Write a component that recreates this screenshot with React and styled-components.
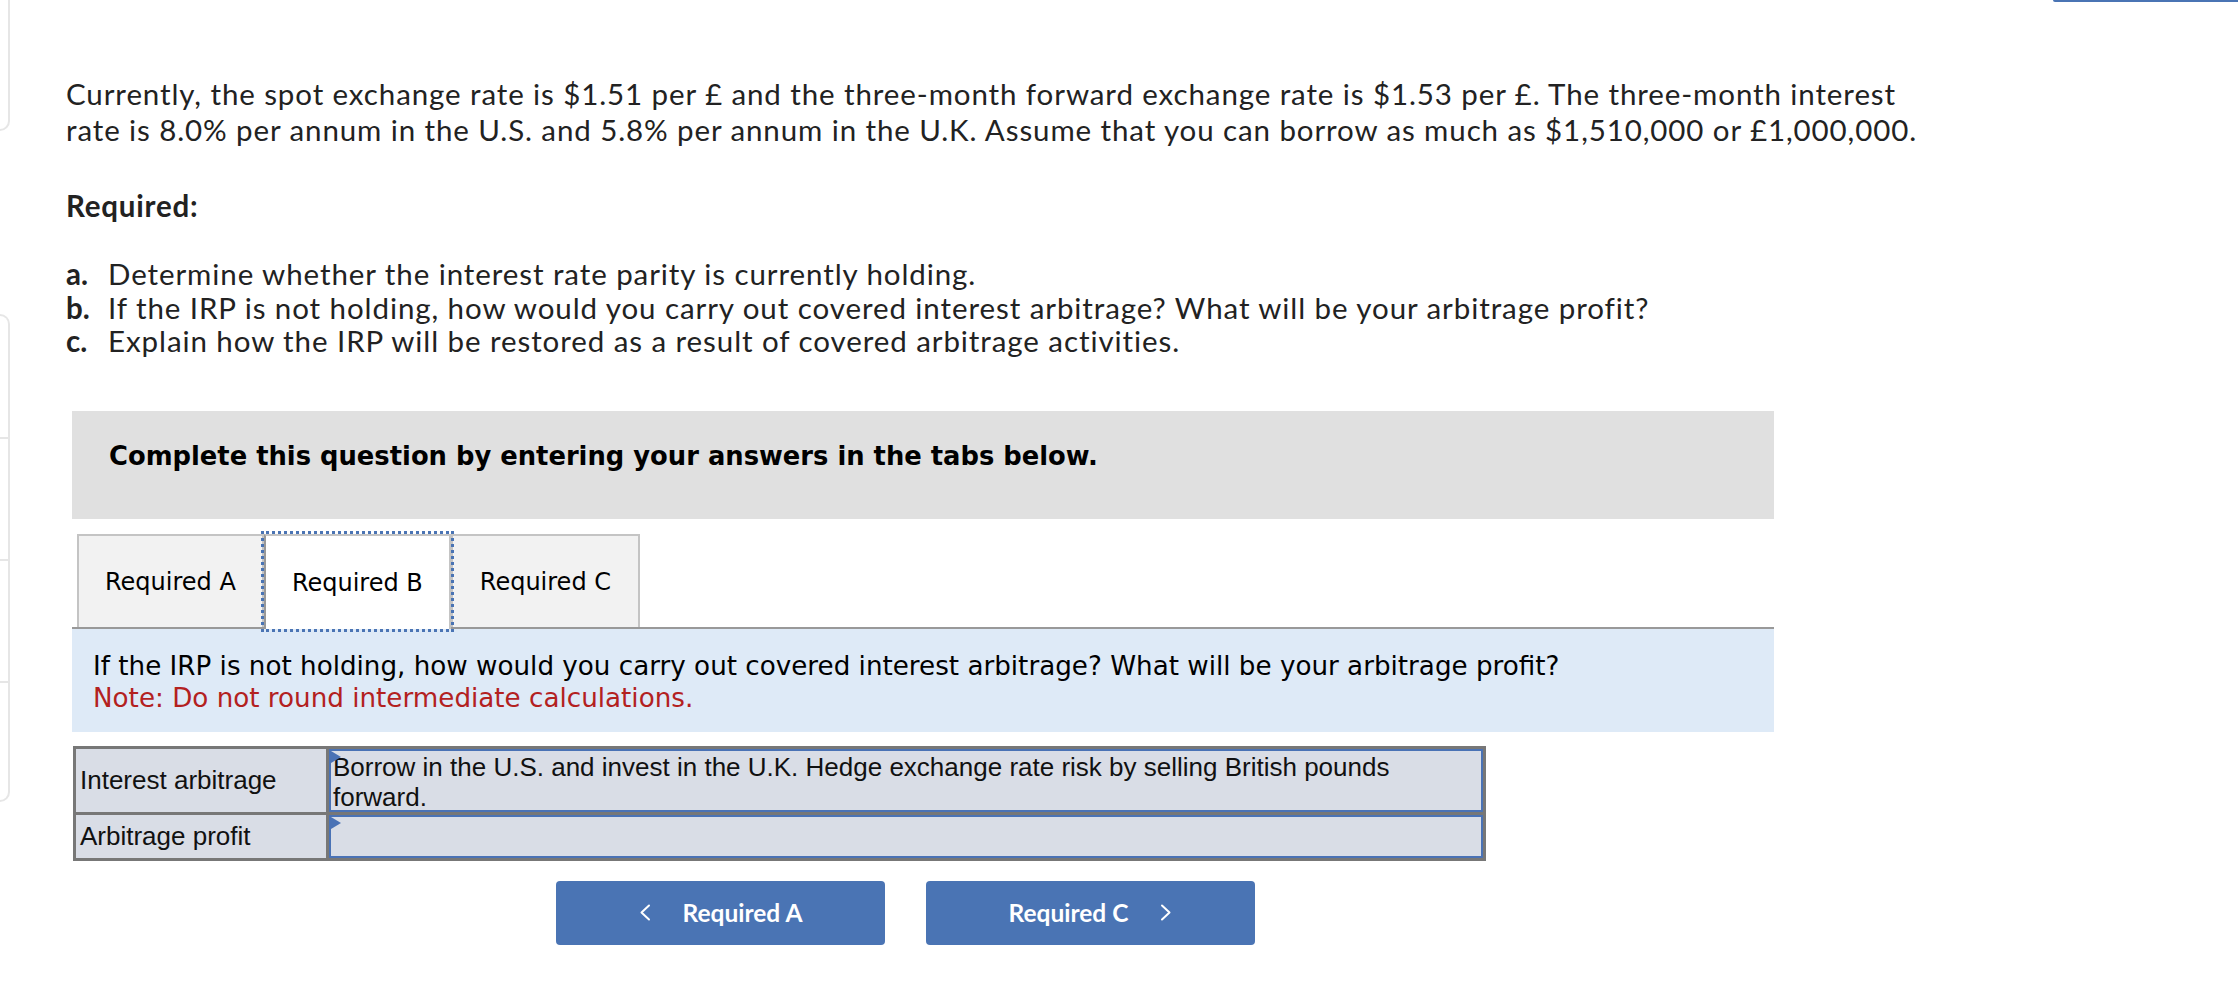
import styled, { createGlobalStyle } from "styled-components";

const GlobalStyle = createGlobalStyle`
	html, body {
		margin: 0;
		padding: 0;
		background: #fff;
	}
	body {
		font-family: "Lato", "Liberation Sans", sans-serif;
		color: #222;
	}
`;

const Page = styled.div`
	display: flex;
	width: 2238px;
	min-height: 1004px;
`;

const Sidebar = styled.div`
	width: 10px;
	flex-shrink: 0;
	display: flex;
	flex-direction: column;
`;

const SideCard = styled.div`
	box-sizing: border-box;
	border: 2px solid #e6e6e6;
	border-left: none;
	border-top: ${(p) => (p.$cut ? "none" : "2px solid #e6e6e6")};
	border-radius: ${(p) => (p.$cut ? "0 0 10px 0" : "0 10px 10px 0")};
	margin-top: ${(p) => p.$top || 0}px;
	display: flex;
	flex-direction: column;
`;

const SideSlot = styled.div`
	height: ${(p) => p.$h}px;
	border-top: ${(p) => (p.$first ? "none" : "2px solid #e6e6e6")};
`;

const Main = styled.main`
	width: 1900px;
	margin-left: 56px;
	padding-top: 76px;
	flex-shrink: 0;
`;

const RightArea = styled.div`
	flex: 1;
	display: flex;
	justify-content: flex-end;
	align-items: flex-start;
`;

const CutButton = styled.div`
	width: 185px;
	height: 2px;
	background: #4a74b4;
	border-bottom-left-radius: 2px;
`;

const Question = styled.p`
	margin: 0;
	width: 1860px;
	font-size: 29.5px;
	letter-spacing: 0.9px;
	line-height: 36px;
`;

const RequiredHead = styled.h3`
	margin: 40px 0 0;
	font-size: 29.5px;
	letter-spacing: 0.8px;
	line-height: 36px;
	font-weight: 700;
`;

const List = styled.ol`
	list-style: none;
	margin: 33px 0 0;
	padding: 0;
`;

const ListItem = styled.li`
	display: flex;
	font-size: 29.5px;
	letter-spacing: 0.92px;
	line-height: 33.5px;
`;

const Marker = styled.span`
	width: 42px;
	flex-shrink: 0;
	font-weight: 700;
	letter-spacing: 0;
`;

const Panel = styled.section`
	width: 1702px;
	margin: 53px 0 0 6px;
`;

const Instruction = styled.div`
	box-sizing: border-box;
	height: 108px;
	background: #e0e0e0;
	padding: 30px 0 0 37px;
	font-family: "DejaVu Sans", Verdana, sans-serif;
	font-weight: 700;
	font-size: 25.8px;
	color: #000;
`;

const TabBar = styled.div`
	display: flex;
	align-items: flex-end;
	margin-top: 15px;
	padding-left: 5px;
	border-bottom: 2px solid #999;
`;

const Tab = styled.button`
	box-sizing: border-box;
	padding: 2px ${(p) => p.$pad}px 0;
	margin-bottom: ${(p) => (p.$active ? -2 : 0)}px;
	height: ${(p) => (p.$active ? 95 : 93)}px;
	border: 2px solid #c4c4c4;
	border-bottom: none;
	border-left-color: ${(p) => (p.$active ? "#999" : "#c4c4c4")};
	background: ${(p) => (p.$active ? "#fff" : "#f2f2f2")};
	outline: ${(p) => (p.$active ? "3px dotted #4a74b4" : "none")};
	outline-offset: 0;
	font-family: "DejaVu Sans", Verdana, sans-serif;
	font-size: 24px;
	color: #000;
	cursor: pointer;
	position: relative;
	z-index: ${(p) => (p.$active ? 1 : 0)};
`;

const Prompt = styled.div`
	box-sizing: border-box;
	height: 103px;
	background: #deeaf7;
	padding: 21px 0 0 21px;
	font-family: "DejaVu Sans", Verdana, sans-serif;
	font-size: 26.2px;
	line-height: 32px;
	color: #000;
`;

const Note = styled.div`
	color: #b3211f;
`;

const AnswerTable = styled.div`
	display: grid;
	grid-template-columns: 250px 1154px;
	grid-template-rows: 63px 43px;
	gap: 3px;
	padding: 3px;
	width: max-content;
	margin: 14px 0 0 1px;
	background: #777;
	font-family: "Liberation Sans", Arial, sans-serif;
	font-size: 26px;
	color: #111;
`;

const LabelCell = styled.div`
	background: #d9dde6;
	display: flex;
	align-items: center;
	padding-left: 4px;
`;

const InputCell = styled.div`
	position: relative;
	box-sizing: border-box;
	background: #d9dde6;
	border: 2px solid #4a72b5;
	padding: 1px 40px 0 2px;
	line-height: 30px;
`;

const Flag = styled.span`
	position: absolute;
	left: 0;
	top: 0;
	width: 0;
	height: 0;
	border-top: 6px solid transparent;
	border-bottom: 6px solid transparent;
	border-left: 10px solid #4a72b5;
`;

const NavRow = styled.div`
	display: flex;
	gap: 41px;
	margin: 20px 0 0 484px;
`;

const NavButton = styled.button`
	width: 329px;
	height: 64px;
	border: none;
	border-radius: 4px;
	background: #4a74b4;
	color: #fff;
	display: flex;
	align-items: center;
	justify-content: center;
	gap: 32px;
	font-family: "Lato", "Liberation Sans", sans-serif;
	font-weight: 700;
	font-size: 24.5px;
	cursor: pointer;
	padding: 0;
`;

const Chevron = ({ dir }) => (
	<svg width='12' height='17' viewBox='0 0 12 17' fill='none'>
		<path
			d={dir === "left" ? "M10 1.5 L2.5 8.5 L10 15.5" : "M2 1.5 L9.5 8.5 L2 15.5"}
			stroke='#fff'
			strokeWidth='2'
			strokeLinecap='round'
			strokeLinejoin='round'
		/>
	</svg>
);

const tasks = [
	["a.", "Determine whether the interest rate parity is currently holding."],
	["b.", "If the IRP is not holding, how would you carry out covered interest arbitrage? What will be your arbitrage profit?"],
	["c.", "Explain how the IRP will be restored as a result of covered arbitrage activities."],
];

const tabs = [
	["Required A", 26],
	["Required B", 26],
	["Required C", 27],
];

const App = () => (
	<>
		<GlobalStyle />
		<Page>
			<Sidebar>
				<SideCard $cut>
					<SideSlot $first $h={129} />
				</SideCard>
				<SideCard $top={183}>
					<SideSlot $first $h={121} />
					<SideSlot $h={120} />
					<SideSlot $h={120} />
					<SideSlot $h={117} />
				</SideCard>
			</Sidebar>
			<Main>
				<Question>
					Currently, the spot exchange rate is $1.51 per £ and the three-month forward exchange rate is $1.53 per £. The
					three-month interest rate is 8.0% per annum in the U.S. and 5.8% per annum in the U.K. Assume that you can borrow
					as much as $1,510,000 or £1,000,000.
				</Question>
				<RequiredHead>Required:</RequiredHead>
				<List>
					{tasks.map(([m, t]) => (
						<ListItem key={m}>
							<Marker>{m}</Marker>
							<span>{t}</span>
						</ListItem>
					))}
				</List>
				<Panel>
					<Instruction>Complete this question by entering your answers in the tabs below.</Instruction>
					<TabBar>
						{tabs.map(([t, pad]) => (
							<Tab key={t} $pad={pad} $active={t === "Required B"}>
								{t}
							</Tab>
						))}
					</TabBar>
					<Prompt>
						If the IRP is not holding, how would you carry out covered interest arbitrage? What will be your arbitrage profit?
						<Note>Note: Do not round intermediate calculations.</Note>
					</Prompt>
					<AnswerTable>
						<LabelCell>Interest arbitrage</LabelCell>
						<InputCell>
							<Flag />
							Borrow in the U.S. and invest in the U.K. Hedge exchange rate risk by selling British pounds forward.
						</InputCell>
						<LabelCell>Arbitrage profit</LabelCell>
						<InputCell>
							<Flag />
						</InputCell>
					</AnswerTable>
					<NavRow>
						<NavButton>
							<Chevron dir='left' />
							Required A
						</NavButton>
						<NavButton>
							Required C
							<Chevron dir='right' />
						</NavButton>
					</NavRow>
				</Panel>
			</Main>
			<RightArea>
				<CutButton />
			</RightArea>
		</Page>
	</>
);

export default App;
